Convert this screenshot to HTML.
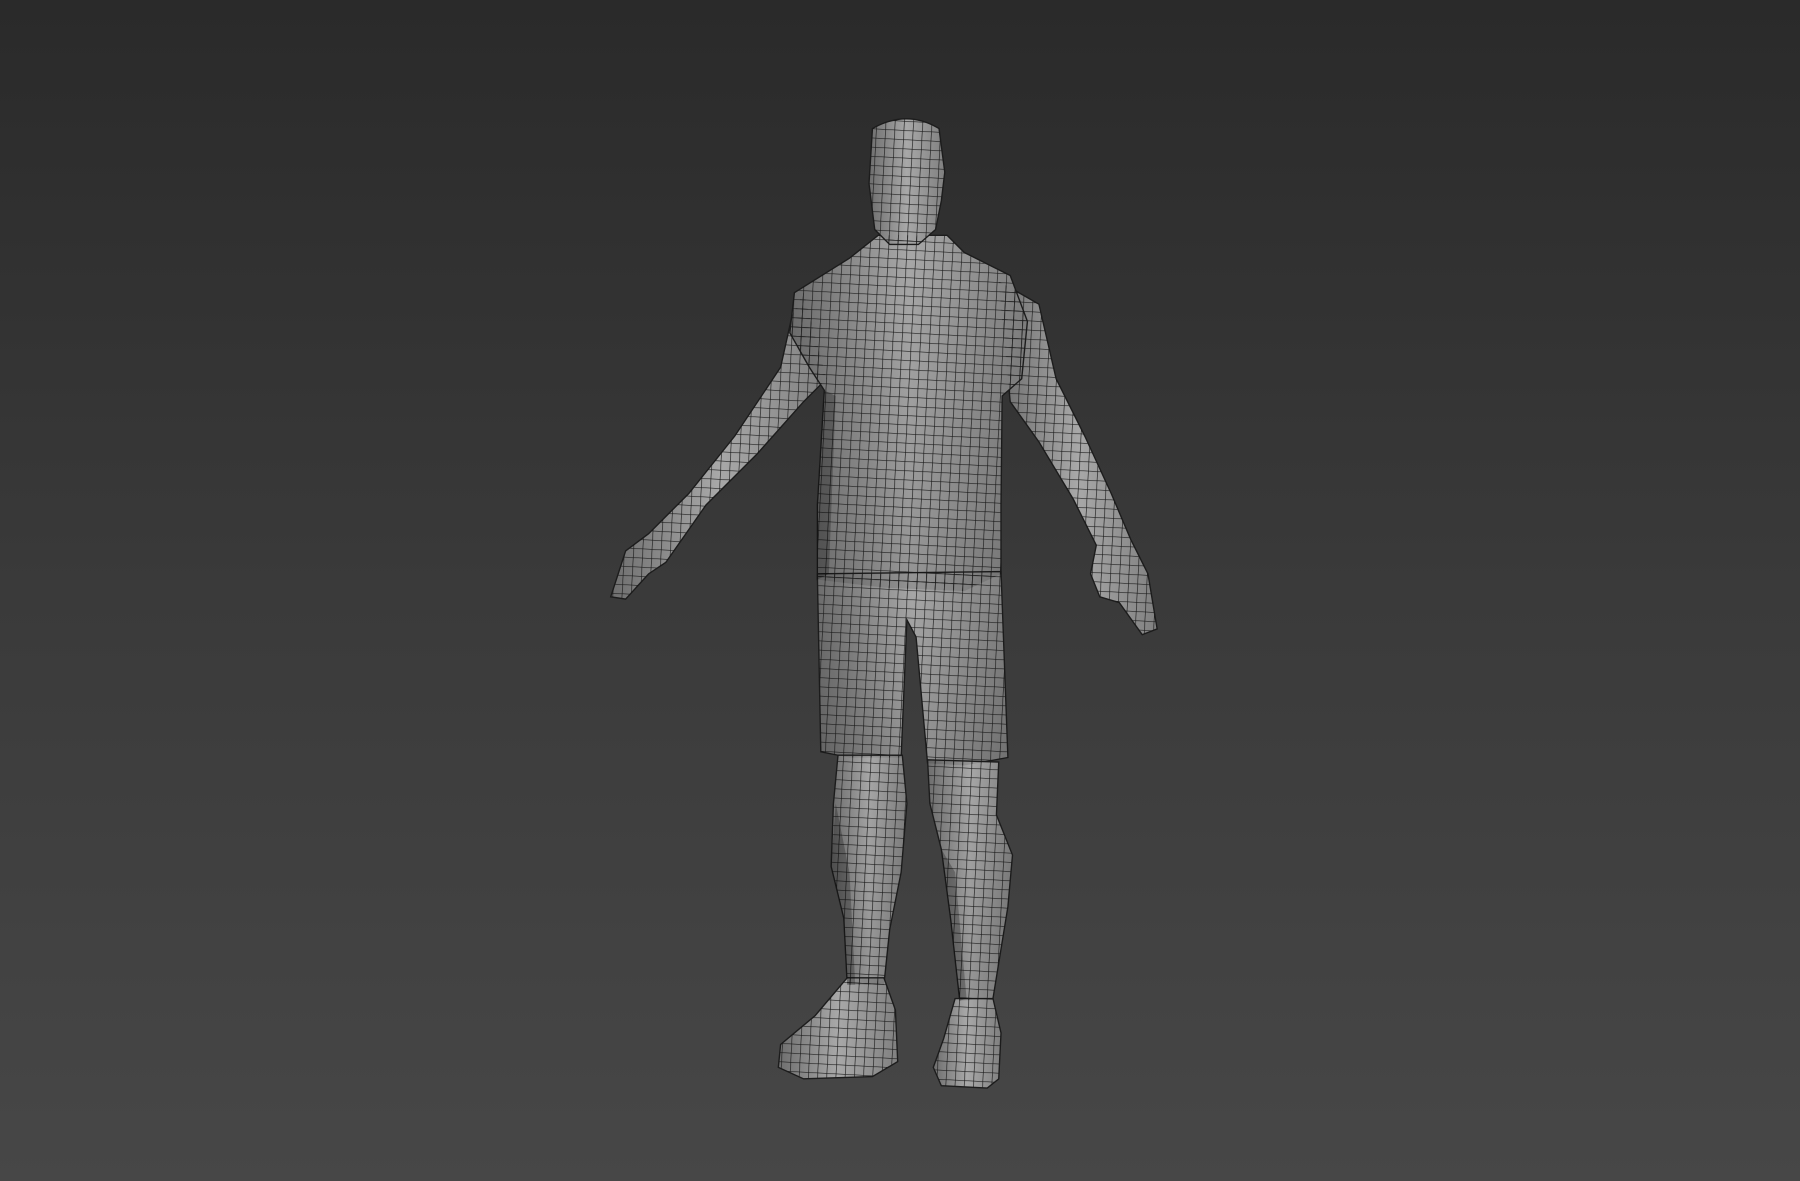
<!DOCTYPE html>
<html><head><meta charset="utf-8"><style>
html,body{margin:0;padding:0;width:1800px;height:1181px;overflow:hidden;background:linear-gradient(#2a2a2a,#3a3a3a 50%,#474747);}
svg{display:block}
</style></head><body>
<svg width="1800" height="1181" viewBox="0 0 1568 1029" preserveAspectRatio="none" xmlns="http://www.w3.org/2000/svg">
<defs>
<pattern id="g" width="8" height="8" patternUnits="userSpaceOnUse" patternTransform="rotate(3)">
<path d="M0 0H8M0 0V8" stroke="#1a1a1a" stroke-width="1.1" fill="none"/>
</pattern>
<linearGradient id="s" x1="0" x2="1">
<stop offset="0" stop-color="#6e6e6e"/><stop offset="0.5" stop-color="#a8a8a8"/><stop offset="1" stop-color="#808080"/>
</linearGradient>
<linearGradient id="sh" x1="0" y1="0" x2="0" y2="1">
<stop offset="0" stop-color="#000" stop-opacity="0"/><stop offset="1" stop-color="#000" stop-opacity="0.12"/>
</linearGradient>
</defs>
<g id="shapes">
<path id="a1" d="M700 255 L690 275 L680 320 L640 380 L600 430 L565 465 L545 480 L532 520 L545 522 L565 500 L580 490 L615 440 L660 395 L700 350 L720 330 Z"/>
<path id="a2" d="M870 245 L905 265 L920 330 L945 380 L968 430 L985 470 L1000 500 L1008 548 L995 553 L975 525 L958 520 L950 500 L955 475 L935 435 L905 385 L880 350 L875 300 Z"/>
<path id="t" d="M765 205 L825 205 L840 220 L880 240 L895 280 L890 330 L873 345 L872 440 L872 500 L840 515 L770 512 L712 505 L712 440 L718 340 L705 320 L688 290 L692 255 L740 225 Z"/>
<path id="sh2" d="M712 500 L872 498 L878 660 L840 667 L808 665 L798 555 L790 540 L785 660 L740 660 L715 655 Z"/>
<path id="l1" d="M730 658 L786 658 L790 700 L785 760 L775 810 L770 858 L738 858 L735 800 L724 755 L726 700 Z"/>
<path id="l2" d="M808 662 L870 664 L868 710 L882 745 L878 790 L865 870 L836 872 L828 800 L820 740 L810 700 Z"/>
<path id="f1" d="M738 852 L770 852 L780 880 L782 925 L760 938 L700 940 L678 930 L680 910 L710 885 Z"/>
<path id="f2" d="M832 870 L865 870 L872 900 L870 940 L860 948 L820 946 L813 930 L822 905 Z"/>
<path id="h" d="M760 112 Q790 95 818 112 L823 150 L820 175 L815 200 L800 213 L775 213 L762 200 L757 160 Z"/>
</g>
<g fill="url(#s)" stroke="#1c1c1c" stroke-width="1.2">
<use href="#a1"/><use href="#a2"/><use href="#t"/><use href="#sh2"/><use href="#l1"/><use href="#l2"/><use href="#f1"/><use href="#f2"/><use href="#h"/>
</g>
<g fill="url(#g)">
<use href="#a1"/><use href="#a2"/><use href="#t"/><use href="#sh2"/><use href="#l1"/><use href="#l2"/><use href="#f1"/><use href="#f2"/><use href="#h"/>
</g>
<g fill="url(#sh)">
<use href="#t"/><use href="#sh2"/><use href="#l1"/><use href="#l2"/>
</g>
<g fill="#000" opacity="0.25">
<path d="M712 440 L718 340 L728 345 L722 500 L712 505 Z"/>
<path d="M724 755 L735 800 L738 858 L745 858 L740 760 L728 700 Z"/>
<path d="M820 740 L828 800 L836 872 L842 870 L832 760 Z"/>
</g>
</svg>
</body></html>
